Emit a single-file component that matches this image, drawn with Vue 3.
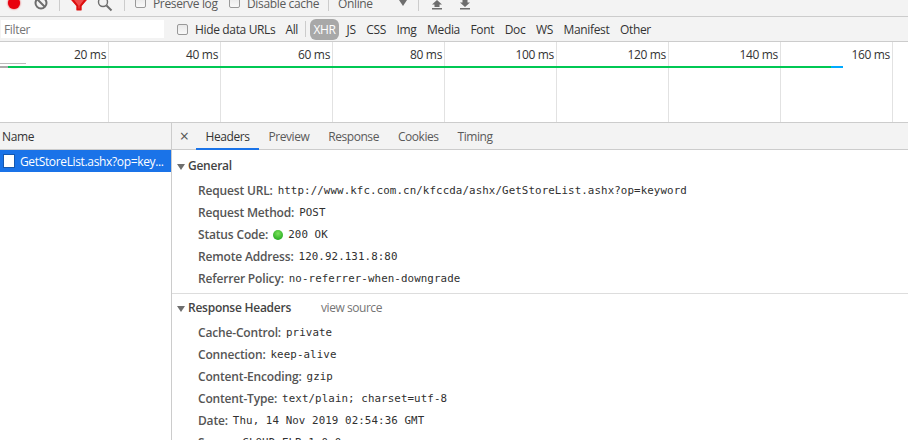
<script setup>
const ticks = [20, 40, 60, 80, 100, 120, 140, 160]
const types = ['JS', 'CSS', 'Img', 'Media', 'Font', 'Doc', 'WS', 'Manifest', 'Other']
const tabs = ['Preview', 'Response', 'Cookies', 'Timing']
const general = [
  ['Request URL:', 'http://www.kfc.com.cn/kfccda/ashx/GetStoreList.ashx?op=keyword'],
  ['Request Method:', 'POST'],
  ['Status Code:', '200 OK', true],
  ['Remote Address:', '120.92.131.8:80'],
  ['Referrer Policy:', 'no-referrer-when-downgrade'],
]
const response = [
  ['Cache-Control:', 'private'],
  ['Connection:', 'keep-alive'],
  ['Content-Encoding:', 'gzip'],
  ['Content-Type:', 'text/plain; charset=utf-8'],
  ['Date:', 'Thu, 14 Nov 2019 02:54:36 GMT'],
  ['Server:', 'CLOUD ELB 1.0.0'],
]
</script>

<template>
  <div class="page">
    <div class="toolbar">
      <span class="record"></span>
      <svg class="ico block" width="14" height="14" viewBox="0 0 14 14"><circle cx="7" cy="7" r="5.500" fill="none" stroke="#6e6e6e" stroke-width="2"/><path d="M3 3l8 8" stroke="#6e6e6e" stroke-width="2"/></svg>
      <span class="sep s1"></span>
      <svg class="ico funnel" width="16" height="12" viewBox="0 0 16 12"><path d="M0 0h16l-5.500 6v4h-5V6z" fill="#f04a4a"/><path d="M1 -1l5.500 7v3.500h3V6L15 -1" fill="none" stroke="#dc0f0f" stroke-width="2"/></svg>
      <svg class="ico search" width="16" height="16" viewBox="0 0 16 16"><circle cx="6" cy="6" r="4.500" fill="none" stroke="#6e6e6e" stroke-width="1.400"/><path d="M9.500 9.500l5 5" stroke="#6e6e6e" stroke-width="2"/></svg>
      <span class="sep s2"></span>
      <span class="check c1"></span><span class="tlabel l1">Preserve log</span>
      <span class="check c2"></span><span class="tlabel l2">Disable cache</span>
      <span class="sep s3"></span>
      <span class="tlabel online">Online</span>
      <span class="caret"></span>
      <span class="sep s4"></span>
      <svg class="ico up" width="10" height="10" viewBox="0 0 10 10"><path d="M5 0l5 4.500H7.500V7h-5V4.500H0zM0 8h10v1.500H0z" fill="#6e6e6e"/></svg>
      <svg class="ico down" width="10" height="10" viewBox="0 0 10 10"><path d="M2.500 0h5v2.500H10L5 7 0 2.500h2.500zM0 8h10v1.500H0z" fill="#6e6e6e"/></svg>
    </div>

    <div class="filterbar">
      <div class="filter">Filter</div>
      <span class="check c3"></span>
      <span class="hide">Hide data URLs</span>
      <span class="type all">All</span>
      <span class="fsep"></span>
      <span class="xhr">XHR</span>
      <span v-for="t in types" :key="t" class="type">{{ t }}</span>
    </div>

    <div class="timeline">
      <div v-for="t in ticks" :key="t" class="tick">{{ t }} ms</div>
      <span class="bar gray-top"></span>
      <span class="bar gray-low"></span>
      <span class="bar green"></span>
      <span class="bar blue"></span>
    </div>

    <div class="split">
      <div class="left">
        <div class="name">Name</div>
        <div class="request">
          <span class="doc"></span>
          <span class="reqname">GetStoreList.ashx?op=key...</span>
        </div>
      </div>
      <div class="right">
        <div class="tabs">
          <span class="close">×</span>
          <span class="tab active">Headers</span>
          <span v-for="t in tabs" :key="t" class="tab">{{ t }}</span>
        </div>
        <section class="general">
          <div class="title"><i class="tri"></i>General</div>
          <div v-for="r in general" :key="r[0]" class="row">
            <b>{{ r[0] }}</b>
            <i v-if="r[2]" class="dot"></i>
            <span>{{ r[1] }}</span>
          </div>
        </section>
        <section class="resp">
          <div class="title"><i class="tri"></i>Response Headers<em>view source</em></div>
          <div v-for="r in response" :key="r[0]" class="row">
            <b>{{ r[0] }}</b>
            <span>{{ r[1] }}</span>
          </div>
        </section>
      </div>
    </div>
  </div>
</template>

<style>
html, body { margin: 0; background: #fff; overflow: hidden; }
</style>

<style scoped>
.page {
  width: 908px;
  height: 440px;
  overflow: hidden;
  font-family: "Open Sans", "Noto Sans", sans-serif;
  font-size: 12px;
  letter-spacing: -0.35px;
  color: #333;
  background: #fff;
}
.toolbar {
  height: 16px;
  background: #f3f3f3;
  border-bottom: 1px solid #ccc;
  position: relative;
  overflow: hidden;
}
.toolbar > * { position: absolute; }
.record { left: 8px; top: -3px; width: 12px; height: 12px; border-radius: 50%; background: #e8000d; box-shadow: 0 0 2px #e8000d; }
.block { left: 34px; top: -4px; }
.funnel { left: 71px; top: 0; }
.search { left: 97px; top: -4px; }
.sep { top: -4px; width: 1px; height: 15px; background: #ccc; }
.s1 { left: 59px; } .s2 { left: 124px; } .s3 { left: 328px; } .s4 { left: 418px; }
.check {
  box-sizing: border-box;
  display: block;
  flex: none;
  width: 11px;
  height: 11px;
  border: 1px solid #999;
  border-radius: 2px;
  background: linear-gradient(#e8e8e8, #f9f9f9);
}
.c1 { left: 135px; top: -3px; } .c2 { left: 229px; top: -3px; }
.tlabel { top: -4px; line-height: 16px; color: #5a5a5a; white-space: nowrap; }
.l1 { left: 153px; } .l2 { left: 247px; } .online { left: 338px; }
.caret { left: 399px; top: 0; width: 0; height: 0; border: 4px solid transparent; border-top: 6px solid #6e6e6e; border-bottom: 0; }
.up { left: 432px; top: 0; } .down { left: 460px; top: 0; }

.filterbar {
  height: 24px;
  background: #f3f3f3;
  border-bottom: 1px solid #ccc;
  display: flex;
  align-items: center;
  padding-left: 1px;
}
.filter {
  width: 160px;
  height: 18px;
  line-height: 20px;
  padding-left: 3px;
  background: #fff;
  color: #757575;
}
.c3 { margin-left: 13px; }
.hide { margin-left: 7px; color: #333; padding-top: 1px; }
.type { margin-left: 10.600px; color: #333; padding-top: 1px; }
.type.all { margin-left: 10px; }
.fsep { width: 1px; height: 16px; background: #ccc; margin: 0 4px 0 7px; }
.xhr { background: #a8a8a8; color: #fff; border-radius: 6px; width: 29px; height: 21px; line-height: 22px; text-align: center; margin-right: -3px; }

.timeline {
  height: 80px;
  border-bottom: 1px solid #ccc;
  display: flex;
  position: relative;
}
.tick {
  box-sizing: border-box;
  flex: 0 0 112px;
  padding: 4px 2px 0 0;
  text-align: right;
  border-right: 1px solid #e2e2e2;
  color: #333;
}
.tick:first-child { flex-basis: 109px; }
.bar { position: absolute; }
.gray-top { left: 0; top: 21px; width: 26px; height: 1px; background: #bbb; }
.gray-low { left: 0; top: 24px; width: 8px; height: 2px; background: #aaa; }
.green { left: 8px; top: 24px; width: 823px; height: 2px; background: #00c853; }
.blue { left: 831px; top: 24px; width: 12px; height: 2px; background: #0af; }

.split { display: flex; height: 317px; }
.left { box-sizing: border-box; width: 172px; border-right: 1px solid #ccc; flex: none; }
.name { height: 26px; line-height: 27px; padding-left: 2px; background: #f3f3f3; border-bottom: 1px solid #ccc; }
.request {
  height: 22px;
  background: #1a73e8;
  color: #fff;
  display: flex;
  align-items: center;
  padding-left: 3px;
  white-space: nowrap;
}
.doc { flex: none; width: 12px; height: 14px; background: #fff; border: 1px solid #1558b0; box-sizing: border-box; margin-right: 5px; }
.right { flex: 1; min-width: 0; }
.tabs {
  height: 26px;
  background: #f3f3f3;
  border-bottom: 1px solid #ccc;
  display: flex;
  align-items: center;
  color: #5a5a5a;
  letter-spacing: -0.45px;
}
.close { width: 24px; text-align: center; font-size: 16px; color: #555; }
.tab { height: 27px; line-height: 27px; padding: 0 9.500px; box-sizing: border-box; align-self: flex-start; }
.tab.active { color: #333; border-bottom: 2px solid #1a73e8; width: 63px; padding: 0; text-align: center; }

.general { padding: 5px 0 3px; border-bottom: 1px solid #ddd; }
.resp { padding-top: 3px; }
.title { height: 25px; line-height: 22px; font-weight: 600; color: #444; padding-left: 16px; position: relative; white-space: nowrap; letter-spacing: -0.25px; }
.tri { position: absolute; left: 5px; top: 9px; border: 4px solid transparent; border-top: 6px solid #6e6e6e; border-bottom: 0; }
.title em { font-style: normal; font-weight: 400; color: #757575; margin-left: 30px; letter-spacing: -0.45px; }
.row { height: 22px; line-height: 22px; padding-left: 26px; white-space: nowrap; display: flex; align-items: center; }
.row b { font-weight: 600; color: #555; margin-right: 5px; letter-spacing: -0.17px; }
.row span { font-family: "DejaVu Sans Mono", monospace; font-size: 10.800px; letter-spacing: 0.1px; color: #303030; }
.dot { flex: none; width: 10px; height: 10px; border-radius: 50%; background: radial-gradient(circle at 50% 35%, #7be15a, #0f9d12); margin-right: 5px; }
</style>
